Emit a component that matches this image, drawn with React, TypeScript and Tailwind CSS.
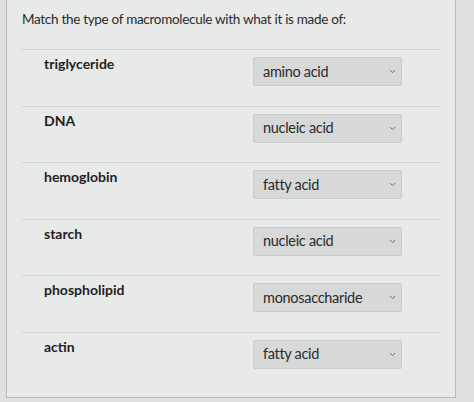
import { ChevronDown } from 'lucide-react'

const rows = [
  { term: 'triglyceride', answer: 'amino acid' },
  { term: 'DNA', answer: 'nucleic acid' },
  { term: 'hemoglobin', answer: 'fatty acid' },
  { term: 'starch', answer: 'nucleic acid' },
  { term: 'phospholipid', answer: 'monosaccharide' },
  { term: 'actin', answer: 'fatty acid' },
]

function Row({ term, answer }: { term: string; answer: string }) {
  return (
    <div className="flex h-[56.5px] border-t border-[#d3d4d4] pl-[22px]">
      <div className="w-[209px] pt-[3px] text-[14px] font-bold text-[#1f1f1f]">{term}</div>
      <div className="pt-[7px]">
        <div className="flex h-[29px] w-[149px] items-center justify-between rounded-[2px] border border-[#cacbcb] bg-[#d7d8d8] pl-[9px] pr-[4px] text-[14.5px] tracking-[-0.3px] text-[#2b2b2b]">
          <span>{answer}</span>
          <ChevronDown size={9} strokeWidth={2.5} className="text-[#666]" />
        </div>
      </div>
    </div>
  )
}

export default function App() {
  return (
    <div className="h-[402px] w-[474px] overflow-hidden bg-[#dfe0e0]" style={{ fontFamily: 'Lato, "Noto Sans", sans-serif' }}>
      <div className="ml-[6px] h-[398px] w-[450px] border-x border-b border-[#b9baba] bg-[#e8e9e9]">
        <div className="h-[43px] pl-[15px] pt-[9px] text-[13.5px] tracking-[-0.3px] text-[#2a2a2a]">Match the type of macromolecule with what it is made of:</div>
        <div className="ml-[15px] mt-[6px] w-[419px]">
          {rows.map((r) => (
            <Row key={r.term} {...r} />
          ))}
        </div>
      </div>
    </div>
  )
}
